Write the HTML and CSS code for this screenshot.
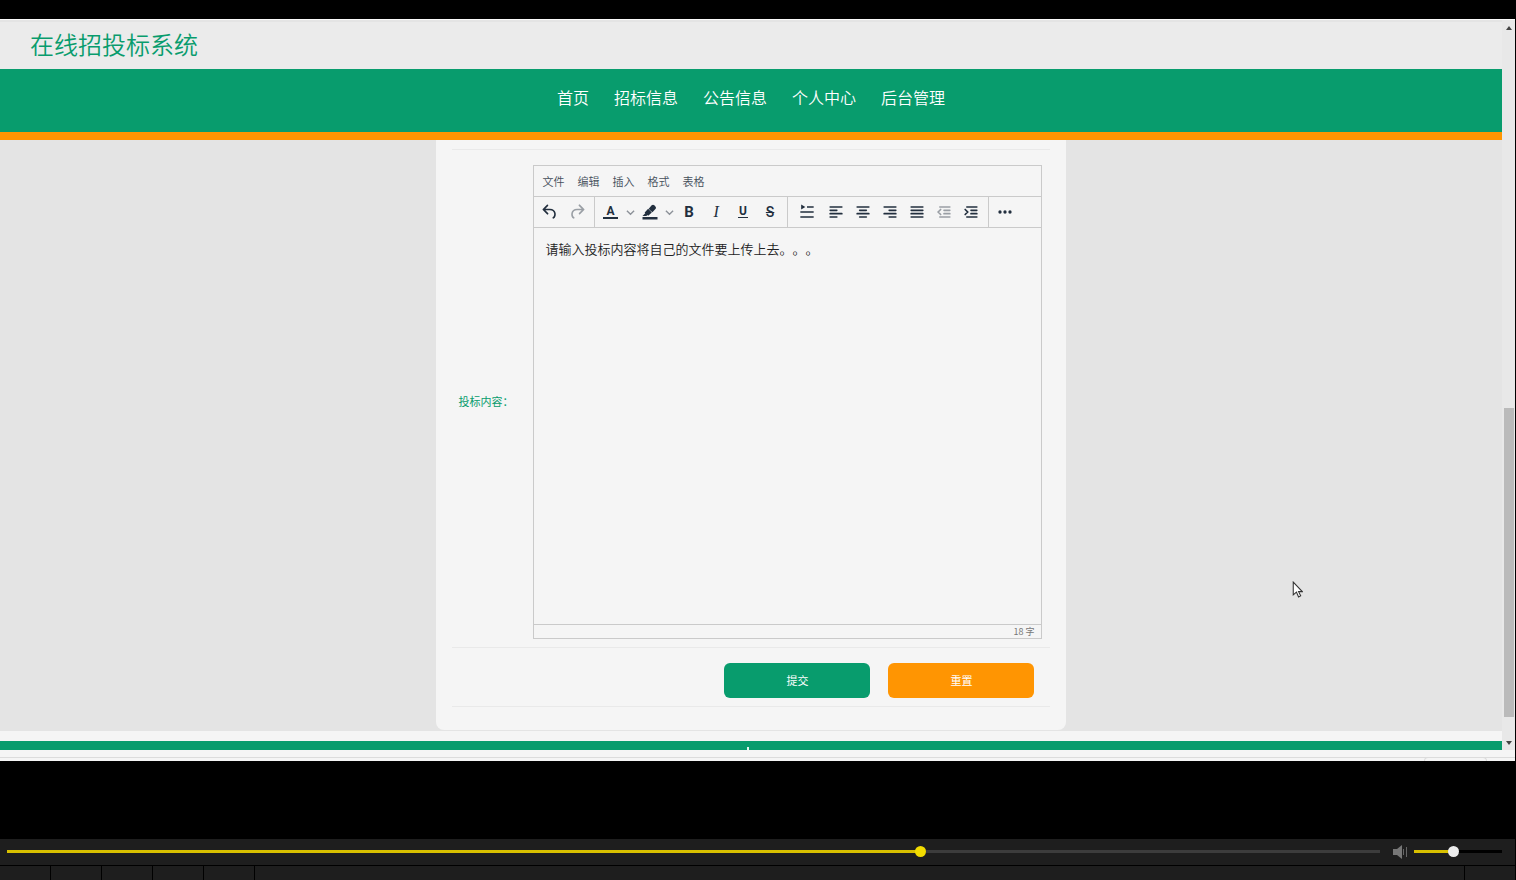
FILE: index.html
```html
<!DOCTYPE html>
<html lang="zh-CN">
<head>
    <meta charset="UTF-8">
    <meta name="viewport" content="width=device-width, initial-scale=1.0">
    <title>在线招投标系统</title>
    <link rel="stylesheet" href="styles.css">
</head>
<body>

    <div class="screen">
        <div class="viewport">
            <div class="page">
                <header class="site-header">
                    <h1 class="site-title">在线招投标系统</h1>
                </header>

                <nav class="site-nav">
                    <a href="#">首页</a>
                    <a href="#">招标信息</a>
                    <a href="#">公告信息</a>
                    <a href="#">个人中心</a>
                    <a href="#">后台管理</a>
                </nav>

                <main class="content">
                    <form class="card">
                        <div class="row row-prev"></div>

                        <div class="row row-editor">
                            <label class="row-label" for="bid-content">投标内容：</label>
                            <div class="editor">
                                <div class="menubar">
                                    <button type="button">文件</button>
                                    <button type="button">编辑</button>
                                    <button type="button">插入</button>
                                    <button type="button">格式</button>
                                    <button type="button">表格</button>
                                </div>

                                <div class="toolbar">
                                    <div class="tool-group">
                                        <button type="button" class="tool" aria-label="撤销">
                                            <svg class="icon" viewBox="0 0 24 24"><path d="M6.4 8H12c3.7 0 6.2 2 6.8 5.1.6 2.7-.4 5.6-2.3 6.8a1 1 0 0 1-1-1.8c1.1-.6 1.8-2.7 1.4-4.6-.5-2.1-2.1-3.5-4.9-3.5H6.4l3.3 3.3a1 1 0 1 1-1.4 1.4l-5-5a1 1 0 0 1 0-1.4l5-5a1 1 0 0 1 1.4 1.4L6.4 8z"/></svg>
                                        </button>
                                        <button type="button" class="tool" aria-label="重做" disabled>
                                            <svg class="icon" viewBox="0 0 24 24"><path d="M17.6 10H12c-2.8 0-4.4 1.4-4.9 3.5-.4 2 .3 4 1.4 4.6a1 1 0 1 1-1 1.8c-2-1.2-2.9-4.1-2.3-6.8.6-3 3-5.1 6.8-5.1h5.6l-3.3-3.3a1 1 0 1 1 1.4-1.4l5 5a1 1 0 0 1 0 1.4l-5 5a1 1 0 0 1-1.4-1.4l3.3-3.3z"/></svg>
                                        </button>
                                    </div>

                                    <div class="tool-group">
                                        <button type="button" class="tool tool-color" aria-label="文字颜色"><span class="glyph-color">A</span></button>
                                        <button type="button" class="tool tool-arrow" aria-label="选择文字颜色">
                                            <svg class="icon-arrow" viewBox="0 0 10 10"><path d="M1 3l4 4 4-4"/></svg>
                                        </button>
                                        <button type="button" class="tool tool-color" aria-label="背景颜色">
                                            <svg class="icon" viewBox="0 0 24 24"><path d="M3 18h18v3H3zM7.700 16.700H3l3.300-3.300-.7-.8L9.800 8l4.400 4.500-4 3.800c-.2.2-.6.2-.8 0l-.6-.7-1.100 1.100zM13 10.700L10.500 8l3.500-4a2.500 2.500 0 0 1 3.200 0L18.500 5.300c.9.9.9 2.300 0 3.200l-3.500 3.900z"/></svg>
                                        </button>
                                        <button type="button" class="tool tool-arrow" aria-label="选择背景颜色">
                                            <svg class="icon-arrow" viewBox="0 0 10 10"><path d="M1 3l4 4 4-4"/></svg>
                                        </button>
                                        <button type="button" class="tool bold">B</button>
                                        <button type="button" class="tool italic">I</button>
                                        <button type="button" class="tool" aria-label="下划线"><span class="glyph-underline">U</span></button>
                                        <button type="button" class="tool strike">S</button>
                                    </div>

                                    <div class="tool-group">
                                        <button type="button" class="tool tool-wide" aria-label="行高">
                                            <svg class="icon" viewBox="0 0 24 24"><path d="M4 11h16v2H4zM4 17h16v2H4zM12 5h8v2h-8zM5 3l5 3-5 3z"/></svg>
                                        </button>
                                        <button type="button" class="tool" aria-label="左对齐">
                                            <svg class="icon icon-lines" viewBox="0 0 24 24"><path d="M5 6h14M5 10h8M5 14h14M5 18h8"/></svg>
                                        </button>
                                        <button type="button" class="tool" aria-label="居中">
                                            <svg class="icon icon-lines" viewBox="0 0 24 24"><path d="M5 6h14M8 10h8M5 14h14M8 18h8"/></svg>
                                        </button>
                                        <button type="button" class="tool" aria-label="右对齐">
                                            <svg class="icon icon-lines" viewBox="0 0 24 24"><path d="M5 6h14M11 10h8M5 14h14M11 18h8"/></svg>
                                        </button>
                                        <button type="button" class="tool" aria-label="两端对齐">
                                            <svg class="icon icon-lines" viewBox="0 0 24 24"><path d="M5 6h14M5 10h14M5 14h14M5 18h14"/></svg>
                                        </button>
                                        <button type="button" class="tool" aria-label="减少缩进" disabled>
                                            <svg class="icon icon-lines" viewBox="0 0 24 24"><path d="M7 6h12M12 10h7M12 14h7M7 18h12M8 9l-3 3 3 3"/></svg>
                                        </button>
                                        <button type="button" class="tool" aria-label="增加缩进">
                                            <svg class="icon icon-lines" viewBox="0 0 24 24"><path d="M7 6h12M12 10h7M12 14h7M7 18h12M5 9l3 3-3 3"/></svg>
                                        </button>
                                    </div>

                                    <div class="tool-group">
                                        <button type="button" class="tool" aria-label="更多">
                                            <svg class="icon" viewBox="0 0 24 24"><circle cx="6" cy="12" r="2"/><circle cx="12" cy="12" r="2"/><circle cx="18" cy="12" r="2"/></svg>
                                        </button>
                                    </div>
                                </div>

                                <textarea class="editor-body" id="bid-content">请输入投标内容将自己的文件要上传上去。。。</textarea>
                                <div class="statusbar">18 字</div>
                            </div>
                        </div>

                        <div class="row row-actions">
                            <button type="submit" class="btn btn-submit">提交</button>
                            <button type="reset" class="btn btn-reset">重置</button>
                        </div>
                    </form>
                </main>

                <footer class="site-footer"><span class="footer-mark"></span></footer>
            </div>

            <div class="scrollbar">
                <svg class="scroll-arrow" viewBox="0 0 6 4"><path d="M0 4l3-4 3 4z"/></svg>
                <div class="scroll-track"><div class="scroll-thumb"></div></div>
                <svg class="scroll-arrow" viewBox="0 0 6 4"><path d="M0 0l3 4 3-4z"/></svg>
            </div>
        </div>
        <div class="window-edge"><div class="window-tab"></div></div>

        <svg class="cursor" viewBox="0 0 10 16"><path d="M1 1v12l3-2.500 2 4.500 2-1-2-4h3.500z"/></svg>
    </div>

    <div class="player">
        <div class="player-bar">
            <input type="range" class="seek" aria-label="播放进度" min="0" max="1000" value="667" style="--fill: 66.7%">
            <svg class="volume-icon" viewBox="0 0 16 14"><path d="M1 4h4l5-4v14l-5-4H1z"/><path class="wave" d="M11.500 4v6M14.500 2v10"/></svg>
            <input type="range" class="volume" aria-label="音量" min="0" max="100" value="44" style="--fill: 44%">
        </div>
        <div class="player-cells">
            <span class="cell"></span>
            <span class="cell"></span>
            <span class="cell"></span>
            <span class="cell"></span>
            <span class="cell"></span>
            <span class="cell cell-fill"></span>
            <span class="cell cell-last"></span>
        </div>
    </div>

</body>
</html>
```
FILE: styles.css
```css
:root {
    --green: #089c6d;
    --orange: #ff9502;
    --panel: #f5f5f5;
    --line: #cacaca;
    --ink: #222f3e;
    --player: #1e1e1e;
}

* {
    margin: 0;
    padding: 0;
    box-sizing: border-box;
}

body {
    display: flex;
    flex-direction: column;
    height: 100vh;
    padding: 19px 1px 0 0;
    background: #000;
    font-family: "Noto Sans CJK SC", sans-serif;
    text-spacing-trim: space-all;
    overflow: hidden;
}

button {
    border: none;
    background: none;
    font-family: inherit;
    cursor: pointer;
}

/* --- Browser window --- */
.screen {
    position: relative;
    display: flex;
    flex-direction: column;
    flex: 1;
    min-height: 0;
    margin-bottom: 78px;
    background: var(--panel);
}

.viewport {
    display: flex;
    flex: 1;
    min-height: 0;
    border-top: 1px solid #fafafa;
}

.page {
    display: flex;
    flex-direction: column;
    flex: 1;
    min-width: 0;
}

.site-header {
    height: 49px;
    padding-left: 30px;
    background: #ebebeb;
    border-top: 2px solid #e4e4e4;
}

.site-title {
    color: var(--green);
    font-size: 24px;
    font-weight: 350;
    line-height: 43px;
}

.site-nav {
    display: flex;
    justify-content: center;
    gap: 25px;
    height: 71px;
    background: var(--green);
    border-bottom: 8px solid var(--orange);
}

.site-nav a {
    color: #fff;
    font-size: 16px;
    font-weight: 350;
    line-height: 56px;
    text-decoration: none;
}

/* --- Form card --- */
.content {
    display: flex;
    justify-content: center;
    flex: 1;
    min-height: 0;
    padding-bottom: 1px;
    background: #e4e4e4;
}

.card {
    display: flex;
    flex-direction: column;
    width: 42%;
    padding: 0 16px 23px;
    background: var(--panel);
    border-radius: 0 0 8px 8px;
}

.row {
    display: flex;
    border-bottom: 1px solid #e9e9e9;
}

.row-prev {
    height: 10px;
}

.row-editor {
    flex: 1;
    min-height: 0;
    padding: 15px 8px 8px 0;
}

.row-label {
    align-self: center;
    width: 81px;
    padding: 0 0 2px 7px;
    color: var(--green);
    font-size: 11px;
}

.row-actions {
    justify-content: flex-end;
    gap: 18px;
    padding: 15px 16px 8px;
}

.btn {
    width: 146px;
    height: 35px;
    padding-bottom: 1px;
    border-radius: 6px;
    color: #fff;
    font-size: 11px;
}

.btn-submit {
    background: var(--green);
}

.btn-reset {
    background: var(--orange);
}

/* --- Rich text editor --- */
.editor {
    display: flex;
    flex-direction: column;
    flex: 1;
    min-width: 0;
    border: 1px solid var(--line);
}

.menubar {
    display: flex;
    gap: 13px;
    height: 31px;
    padding-left: 9px;
    border-bottom: 1px solid var(--line);
}

.menubar button {
    color: #444e5a;
    font-size: 11px;
    font-weight: 350;
}

.toolbar {
    display: flex;
    height: 31px;
    border-bottom: 1px solid var(--line);
}

.tool-group {
    display: flex;
    padding: 0 3px;
    border-right: 1px solid var(--line);
}

.tool-group:last-child {
    border-right: none;
}

.tool {
    display: flex;
    align-items: center;
    justify-content: center;
    width: 27px;
    color: var(--ink);
    font-family: Roboto, sans-serif;
    font-size: 14px;
}

.tool:disabled {
    color: #9a9fa5;
}

.tool-color {
    width: 26px;
}

.tool-arrow {
    width: 13px;
}

.tool-wide {
    width: 32px;
}

.icon {
    flex: none;
    width: 20px;
    height: 20px;
    fill: currentColor;
}

.icon-lines {
    fill: none;
    stroke: currentColor;
    stroke-width: 2;
    stroke-linecap: round;
}

.icon-arrow {
    flex: none;
    width: 9px;
    height: 9px;
    fill: none;
    stroke: #8d9299;
    stroke-width: 1.5;
}

.glyph-color {
    width: 15px;
    border-bottom: 2px solid var(--ink);
    font-size: 12px;
    font-weight: 700;
    line-height: 12px;
}

.bold {
    font-size: 15px;
    font-weight: 700;
}

.italic {
    font-family: "Liberation Serif", serif;
    font-size: 16px;
    font-style: italic;
}

.glyph-underline {
    width: 10px;
    border-bottom: 1px solid var(--ink);
    font-size: 12px;
    font-weight: 700;
    line-height: 11px;
}

.strike {
    font-weight: 500;
    text-decoration: line-through;
}

.editor-body {
    flex: 1;
    min-height: 0;
    padding: 11px 12px;
    border: none;
    outline: none;
    resize: none;
    background: transparent;
    color: #222;
    font-family: inherit;
    font-size: 13px;
    font-weight: 350;
    line-height: 20px;
    text-spacing-trim: inherit;
}

.statusbar {
    height: 14px;
    padding-right: 7px;
    border-top: 1px solid var(--line);
    color: #777;
    font-size: 9px;
    line-height: 14px;
    text-align: right;
}

/* --- Footer strip --- */
.site-footer {
    display: flex;
    align-items: flex-end;
    justify-content: center;
    height: 19px;
    padding-right: 7px;
    background: var(--green);
    border-top: 10px solid var(--panel);
}

.footer-mark {
    width: 2px;
    height: 3px;
    background: #e4f5ee;
}

/* --- Scrollbar --- */
.scrollbar {
    display: flex;
    flex-direction: column;
    align-items: center;
    width: 13px;
    padding: 6px 0 5px;
    background: #e8e8e8;
}

.scroll-arrow {
    width: 6px;
    height: 4px;
    fill: #444;
}

.scroll-track {
    display: flex;
    flex-direction: column;
    justify-content: flex-end;
    flex: 1;
    width: 10px;
    padding-bottom: 24px;
}

.scroll-thumb {
    height: 45%;
    background: #bababa;
}

.window-edge {
    display: flex;
    justify-content: flex-end;
    height: 11px;
    padding: 7px 28px 0 0;
    background: linear-gradient(#dcdcdc, #dcdcdc) 0 7px / 100% 1px no-repeat;
}

.window-tab {
    width: 63px;
    border: 1px solid #dcdcdc;
    border-bottom: none;
    border-radius: 4px 4px 0 0;
}

.cursor {
    position: absolute;
    top: 562px;
    left: 1292px;
    width: 11px;
    height: 17px;
    fill: #fff;
    stroke: #333;
}

/* --- Player controls --- */
.player {
    background: var(--player);
}

.player-bar {
    display: flex;
    align-items: center;
    height: 26px;
    padding: 0 13px 1px 7px;
}

.seek,
.volume {
    appearance: none;
    height: 11px;
    background: transparent;
}

.seek {
    flex: 1;
    min-width: 0;
}

.volume {
    width: 88px;
}

.seek::-webkit-slider-runnable-track {
    height: 3px;
    background: linear-gradient(to right, #d8c000 var(--fill), #3c3c3c var(--fill));
}

.volume::-webkit-slider-runnable-track {
    height: 3px;
    background: linear-gradient(to right, #d8c000 var(--fill), #000 var(--fill));
}

.seek::-webkit-slider-thumb,
.volume::-webkit-slider-thumb {
    appearance: none;
    width: 11px;
    height: 11px;
    margin-top: -4px;
    border-radius: 50%;
    background: #f2dc00;
}

.volume::-webkit-slider-thumb {
    background: #ececec;
}

.volume-icon {
    width: 16px;
    height: 14px;
    margin: 0 6px 0 12px;
    fill: #777;
}

.wave {
    fill: none;
    stroke: #666;
}

.player-cells {
    display: flex;
    height: 15px;
    border-top: 1px solid #000;
}

.cell {
    width: 51px;
    border-right: 1px solid #000;
}

.cell-fill {
    flex: 1;
}

.cell-last {
    width: 50px;
    border-right: none;
}
```
